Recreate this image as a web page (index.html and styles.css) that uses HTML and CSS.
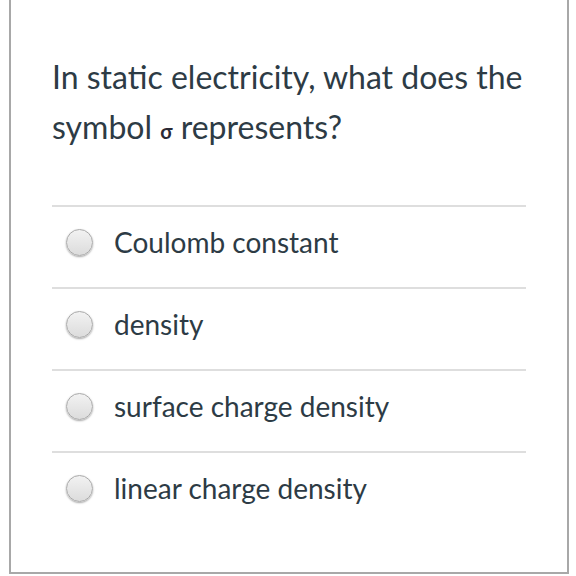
FILE: index.html
```html
<!DOCTYPE html>
<html>
<head>
<meta charset="utf-8">
<link rel="stylesheet" href="styles.css">
</head>
<body>
<div class="card">
  <div class="question">In static electricity, what does the symbol <span class="sym">σ</span> represents?</div>
  <div class="answers">
    <div class="answer"><span class="radio"></span><span class="label">Coulomb constant</span></div>
    <div class="answer"><span class="radio"></span><span class="label">density</span></div>
    <div class="answer"><span class="radio"></span><span class="label">surface charge density</span></div>
    <div class="answer"><span class="radio"></span><span class="label">linear charge density</span></div>
  </div>
</div>
</body>
</html>
```
FILE: styles.css
```css
html, body {
  margin: 0;
  padding: 0;
  background: #ffffff;
}
body {
  font-family: Lato, "Open Sans", sans-serif;
  color: #2d3b45;
}
.card {
  margin-left: 9px;
  height: 572px;
  border: 2px solid #a8a8a8;
  border-top: none;
  box-sizing: content-box;
  padding: 0 41px 0 41px;
  width: 474px;
}
.question {
  padding-top: 52px;
  font-size: 32px;
  line-height: 50px;
  height: 100px;
  margin-bottom: 53px;
}
.sym {
  font-size: 20px;
  font-weight: 700;
  line-height: 20px;
  color: #2a2a35;
}
.answers {
  display: flex;
  flex-direction: column;
}
.answer {
  border-top: 2px solid #dedede;
  height: 70px;
  padding-bottom: 10px;
  padding-left: 14px;
  display: flex;
  align-items: center;
  font-size: 28px;
}
.radio {
  width: 25px;
  height: 25px;
  border-radius: 50%;
  border: 1px solid #a9a9a9;
  background: linear-gradient(#f2f2f2, #dcdcdc);
  box-shadow: 0 1px 2px rgba(0,0,0,0.35);
  margin-right: 21px;
  flex: none;
}
.label {
  line-height: 34px;
}
```
